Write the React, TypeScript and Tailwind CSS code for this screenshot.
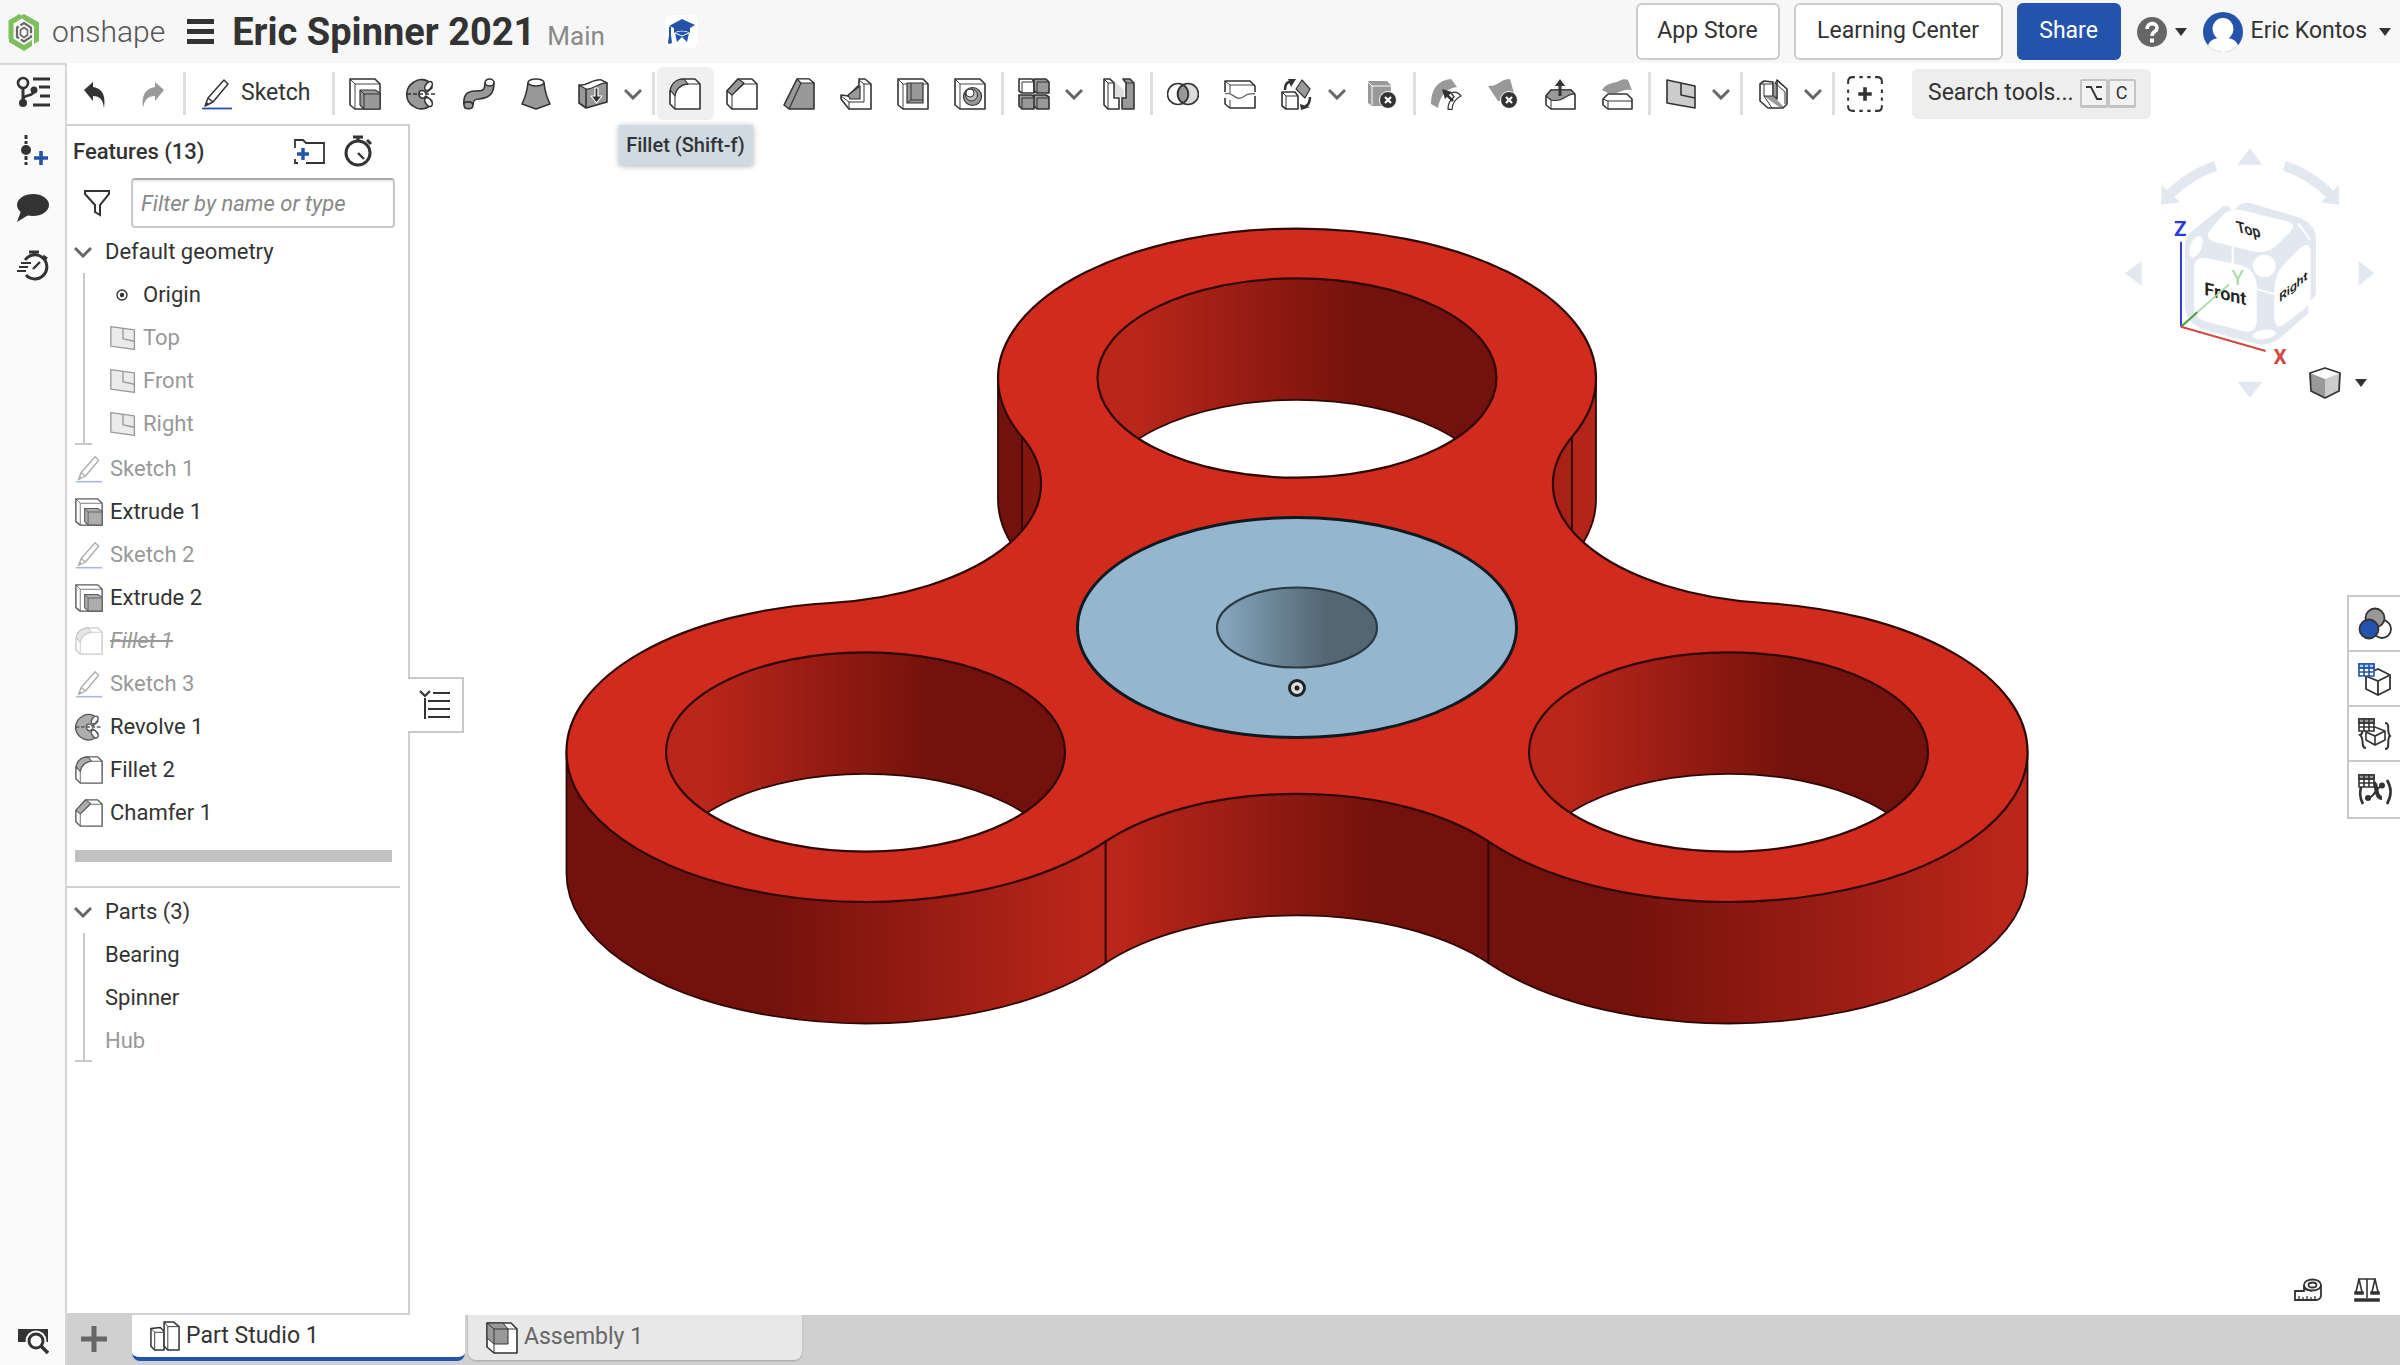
import type { ReactNode } from 'react'

const INK = '#333333'
const MID = '#999999'

interface IconProps {
  size?: number
  children: ReactNode
}

// All tool icons share a 30 unit grid with one unit of bleed for the strokes
function Icon({ size = 32, children }: IconProps) {
  return (
    <svg
      width={size}
      height={size}
      viewBox="-1 -1 32 32"
      fill="none"
      stroke={INK}
      strokeWidth="1.6"
      strokeLinejoin="round"
      aria-hidden="true"
      className="shrink-0"
    >
      {children}
    </svg>
  )
}

const icons: Record<string, ReactNode> = {
  undo: (
    <path d="M4 11 13 3v5c9 1 13 8 11 21-1-8-4-12-11-12v5z" fill={INK} stroke="none" />
  ),
  redo: (
    <path d="M27 11 18 3v5C9 9 4 16 6 29c1-8 5-12 12-12v5z" fill={MID} stroke="none" />
  ),
  sketch: (
    <>
      <path d="M3 27 6 19 22 1l4 4-15 18zM6 19l5 4M3 27l3-3" fill="#fff" strokeWidth="1.5" />
      <path d="M0 29.500H30" stroke="#2453ac" strokeWidth="1.800" />
    </>
  ),
  extrude: (
    <>
      <path d="M0 0H25L30 5V30H5L0 26z" fill="#fff" />
      <path d="M0 0 5 5H30M5 5V30" strokeWidth="0.900" />
      <path d="M10 11H25L30 14V30H14L10 26z" fill={MID} strokeWidth="1.200" />
      <path d="M10 11 14 15H30M14 15V30" strokeWidth="1" />
    </>
  ),
  revolve: (
    <>
      <path
        d="M24 5C20 0 12-1 7 3-3 9-2 22 6 27c6 5 15 3 18-2l1-3-6-5c-3 4-7 2-7-2s4-5 7-1l6-5z"
        fill={MID}
      />
      <ellipse cx="21.500" cy="7" rx="3" ry="5" transform="rotate(35 21.500 7)" fill="#fff" />
      <ellipse cx="21.500" cy="23" rx="3" ry="5" transform="rotate(-35 21.500 23)" fill="#fff" />
      <path d="M0 15H30" strokeDasharray="4 2" />
    </>
  ),
  sweep: (
    <>
      <path
        d="M21 4c0 8-3 8-10 8-8 0-12 4-11 14 0 5 9 5 9 0 0-5 2-6 6-6 11-1 15-6 15-16"
        fill={MID}
      />
      <ellipse cx="25.500" cy="3.500" rx="4.500" ry="3.500" fill="#fff" />
      <path d="M0 25c0-3 9-3 9 1" />
    </>
  ),
  loft: (
    <>
      <path d="M7 4C6 13 4 19 1 25l14 5 14-5C26 19 24 13 23 4z" fill={MID} />
      <ellipse cx="15" cy="3.500" rx="8" ry="3.500" fill="#fff" />
    </>
  ),
  thicken: (
    <>
      <path d="M1 6C8 8 14 0 23 1l6 3v19L8 29l-7-5z" fill={MID} />
      <path d="M1 6C8 8 14 0 23 1l6 3C22 3 15 11 8 10z" fill="#fff" strokeWidth="1.200" />
      <path d="M8 10v19" />
      <path d="M17 9h3v8h4l-5.500 7L13 17h4z" fill={INK} stroke="#fff" strokeWidth="1.200" />
    </>
  ),
  fillet: (
    <>
      <path d="M0 25V15C0 6 6 0 14 0H25L30 5V30H5z" fill="#fff" />
      <path d="M0 13C1 5 6 0 14 0L18 5C11 6 6 10 5 17L1 12z" fill={MID} strokeWidth="1.200" />
      <path d="M5 30V17C6 9 11 5 18 5H30M30 5 26 1" strokeWidth="1" />
    </>
  ),
  chamfer: (
    <>
      <path d="M0 25V12L11 0H25L30 5V30H5z" fill="#fff" />
      <path d="M0 12 11 0 17 4 5 16z" fill={MID} strokeWidth="1.200" />
      <path d="M5 30V16L17 5H30" strokeWidth="1" />
    </>
  ),
  draft: (
    <>
      <path d="M0 26 13 0H25L30 4V30H5z" fill={MID} />
      <path d="M13 0 17 4H30L25 0z" fill="#fff" strokeWidth="1.200" />
      <path d="M17 4 5 30" strokeWidth="1.200" />
    </>
  ),
  rib: (
    <>
      <path d="M18 0h6l6 5V30H8L0 20v-4l7 1L18 6z" fill="#fff" />
      <path d="M7 16 19 7v13H9z" fill={MID} strokeWidth="1.200" />
      <path d="M18 1 23 5V23H8L0 17M23 5h7M8 23v7" strokeWidth="1" />
    </>
  ),
  shell: (
    <>
      <path d="M0 0H25L30 5V30H5L0 26z" fill="#fff" />
      <path d="M0 0 5 5H30M5 5V30" strokeWidth="0.900" />
      <path d="M9 4H25V24H9z" fill={MID} strokeWidth="1.200" />
      <path d="M9 24l4-3V4M13 21H25" strokeWidth="1" />
    </>
  ),
  hole: (
    <>
      <path d="M0 0H25L30 5V30H5L0 26z" fill="#fff" />
      <path d="M0 0 5 5H30M5 5V30" strokeWidth="0.900" />
      <circle cx="17.500" cy="17.500" r="9" fill={MID} strokeWidth="1.200" />
      <circle cx="16.500" cy="16" r="6" fill="#bbb" strokeWidth="1" />
      <circle cx="15" cy="14" r="4" fill="#fff" strokeWidth="1" />
    </>
  ),
  pattern: (
    <>
      <path d="M0 0H13L15 3V14H3L0 12z" fill="#fff" />
      <path d="M15 0H27L30 3V14H18L15 12zM0 16H13L15 18V30H3L0 27zM15 16H27L30 18V30H18L15 27z" fill={MID} />
      <path d="M3 3h12M3 3v11M18 3h12M18 3v11M3 19h12M3 19v11M18 19h12M18 19v11" strokeWidth="1" />
    </>
  ),
  mirror: (
    <>
      <path d="M8 0 20 11v9l-9-3z" fill="#ddd" stroke="none" />
      <path d="M0 0h6l4 4v15h5v11H4L0 26z" fill="#fff" />
      <path d="M4 4h6M4 4v26M0 0l4 4" strokeWidth="1" />
      <path d="M19 0h7l4 4v26H18V19h4V4z" fill={MID} />
      <path d="M22 4h8" strokeWidth="1" />
    </>
  ),
  boolean: (
    <>
      <circle cx="10" cy="15" r="10.500" />
      <circle cx="20" cy="15" r="10.500" fill={MID} fillOpacity="0.350" />
      <path d="M15 6a10.500 10.500 0 0 1 0 18 10.500 10.500 0 0 1 0-18z" fill={MID} />
    </>
  ),
  split: (
    <>
      <path d="M0 13V2h25l5 5v6M0 19v6l5 4h25V17" fill="#fff" />
      <path d="M0 2l5 4h25M5 6v8M5 21v8" strokeWidth="0.900" />
      <path d="M0 15c7-4 10 8 18 3 4-3 7-4 12-3" strokeWidth="1.300" stroke="#666" />
    </>
  ),
  transform: (
    <>
      <path d="M0 13h13l3 4v13H4l-4-3z" fill="#fff" />
      <path d="M4 17h12M4 17v13M0 13l4 4" strokeWidth="1" />
      <path d="M20 1l8 9-5 9-9-9z" fill={MID} strokeWidth="1.200" />
      <path d="M3 11c0-5 2-8 5-8" strokeWidth="2.500" />
      <path d="M6 0h8l-5 8zM18 25l1 6 9-3z" fill={INK} stroke="none" />
      <path d="M28 18c0 5-2 9-5 9" strokeWidth="2.500" />
    </>
  ),
  deletePart: (
    <>
      <path d="M1 2h19l4 4v21H5l-4-3z" fill={MID} stroke="none" />
      <path d="M1 3l4 4h19M5 7v19" stroke="#fff" strokeWidth="1" />
      <circle cx="21" cy="21" r="8.500" fill={INK} stroke="#fff" strokeWidth="1" />
      <path d="M18 18l6 6m0-6-6 6" stroke="#fff" strokeWidth="2.200" />
    </>
  ),
  fillSurface: (
    <>
      <path d="M0 25C0 10 7 1 20 0l6 8C16 9 9 16 7 29z" fill={MID} stroke="none" />
      <path d="M17 30c0-6 2-9 6-12l-3-4c4-2 7-1 10 3-6 3-9 7-9 14z" fill="#fff" strokeWidth="1.300" />
      <path d="M22 22 13 13" strokeWidth="2.500" />
      <path d="M11 10l10 3-7 7z" fill={INK} stroke="none" />
    </>
  ),
  deleteSurface: (
    <>
      <path d="M0 7c10 1 12-7 22-7l6 21-18 1z" fill={MID} stroke="none" />
      <circle cx="21" cy="21" r="8.500" fill={INK} stroke="#fff" strokeWidth="1" />
      <path d="M18 18l6 6m0-6-6 6" stroke="#fff" strokeWidth="2.200" />
    </>
  ),
  moveFace: (
    <>
      <path d="M1 17 6 11h20l4 5v14H6l-5-4z" fill="#fff" />
      <path d="M1 17l5-6h20l4 4c-8-2-10 9-24 6z" fill={MID} strokeWidth="1.200" />
      <path d="M6 21v9" strokeWidth="1" />
      <path d="M15 17V4" strokeWidth="3" />
      <path d="M10 7l5-7 5 7z" fill={INK} stroke="none" />
    </>
  ),
  replaceFace: (
    <>
      <path d="M0 11C5 3 11 5 17 2c4-2 6-2 9-1l4 10c-10-2-13 5-24 3z" fill={MID} stroke="none" />
      <path d="M1 20l5-5h19l5 5v10H6l-5-4z" fill="#fff" />
      <path d="M1 20l5 2h24M6 22v8" strokeWidth="1" />
    </>
  ),
  plane: (
    <>
      <path d="M1 1 29 7V29L1 24z" fill="#ccc" />
      <path d="M15 4v12l14 3" />
    </>
  ),
  sheet: (
    <>
      <path d="M2 5 6 2l9 1v14l4 3V1l10 9v15l-4 4H10L2 22z" fill="#fff" />
      <path d="M6 17h9l11 11h-5z" fill={MID} stroke="none" />
      <path d="M6 5h9M6 5v12l8 12M19 1 17 4v14M17 4l10 9v12M2 5h4M6 17h9" strokeWidth="1" />
    </>
  ),
  custom: (
    <>
      <path
        d="M0 6V4q0-4 4-4h2M10 0h3M17 0h3M24 0h2q4 0 4 4v2M30 11v3M30 18v3M30 25v1q0 4-4 4h-2M20 30h-3M13 30h-3M6 30H4q-4 0-4-4v-1M0 21v-3M0 14v-3"
        strokeWidth="1.800"
      />
      <path d="M15 9v12M9 15h12" strokeWidth="3.200" />
    </>
  ),
  part: (
    <>
      <path d="M0 7 10 6l4 4V30H4L0 26z" fill="#fff" />
      <path d="M14 0H24l6 5V30H18l-4-4z" fill="#fff" />
      <path d="M4 11h10M4 11v19M0 7l4 4M18 5h12M18 5v25M14 0l4 5" strokeWidth="1" />
    </>
  ),
  assembly: (
    <>
      <path d="M0 0H24L30 6V30H7L0 24z" fill="#fff" />
      <path d="M0 0H16L21 6V21H7L0 15z" fill={MID} strokeWidth="1" />
      <path d="M0 0 7 6H30M7 6V30" strokeWidth="1" />
    </>
  ),
}

function Chevron() {
  return (
    <svg width="18" height="12" viewBox="0 0 18 12" fill="none" stroke="#666" strokeWidth="3" aria-hidden="true">
      <path d="M1 2 9 10 17 2" />
    </svg>
  )
}

function Caret() {
  return (
    <svg width="12" height="8" viewBox="0 0 12 8" fill={INK} aria-hidden="true">
      <path d="M0 0H12L6 8z" />
    </svg>
  )
}

const toolGroups: { name: string; label: string }[][] = [
  [
    { name: 'extrude', label: 'Extrude' },
    { name: 'revolve', label: 'Revolve' },
    { name: 'sweep', label: 'Sweep' },
    { name: 'loft', label: 'Loft' },
    { name: 'thicken', label: 'Thicken' },
    { name: 'more', label: 'More solids' },
  ],
  [
    { name: 'fillet', label: 'Fillet' },
    { name: 'chamfer', label: 'Chamfer' },
    { name: 'draft', label: 'Draft' },
    { name: 'rib', label: 'Rib' },
    { name: 'shell', label: 'Shell' },
    { name: 'hole', label: 'Hole' },
  ],
  [
    { name: 'pattern', label: 'Linear pattern' },
    { name: 'more', label: 'More patterns' },
    { name: 'mirror', label: 'Mirror' },
  ],
  [
    { name: 'boolean', label: 'Boolean' },
    { name: 'split', label: 'Split' },
    { name: 'transform', label: 'Transform' },
    { name: 'more', label: 'More transforms' },
    { name: 'deletePart', label: 'Delete part' },
  ],
  [
    { name: 'fillSurface', label: 'Modify fillet' },
    { name: 'deleteSurface', label: 'Delete face' },
    { name: 'moveFace', label: 'Move face' },
    { name: 'replaceFace', label: 'Replace face' },
  ],
  [
    { name: 'plane', label: 'Plane' },
    { name: 'more', label: 'More planes' },
  ],
  [
    { name: 'sheet', label: 'Sheet metal' },
    { name: 'more', label: 'More sheet metal' },
  ],
  [{ name: 'custom', label: 'Add custom features' }],
]

function Separator() {
  return <div className="mx-[2px] h-[43px] w-[3px] shrink-0 bg-[#dedede]" />
}

function ToolButton({ name, label }: { name: string; label: string }) {
  if (name === 'more') {
    return (
      <button aria-label={label} className="flex h-[53px] w-7 items-center pl-[2px]">
        <Chevron />
      </button>
    )
  }
  const active = name === 'fillet'
  return (
    <div className="relative">
      <button
        aria-label={label}
        className={
          active
            ? 'flex h-[53px] w-[57px] items-center justify-center rounded-md bg-[#f0f0f0] pr-[2px]'
            : 'flex h-[53px] w-[57px] items-center justify-center rounded-md pr-[2px]'
        }
      >
        <Icon size={name === 'custom' ? 36 : 32}>{icons[name]}</Icon>
      </button>
      {active && (
        <div
          role="tooltip"
          className="absolute top-[58px] left-1/2 z-20 flex h-10 w-[134px] -translate-x-1/2 items-center justify-center bg-[#d0dae3] text-[20px] font-medium whitespace-nowrap shadow-[0_1px_6px_rgba(0,0,0,0.3)]"
        >
          Fillet (Shift-f)
        </div>
      )}
    </div>
  )
}

function Toolbar() {
  return (
    <div role="toolbar" aria-label="Part tools" className="flex items-center py-1">
      <ToolButton name="undo" label="Undo" />
      <ToolButton name="redo" label="Redo" />
      <Separator />
      <button className="flex h-[53px] w-[142px] items-center gap-2 pl-[13px] text-[23px]">
        <Icon>{icons.sketch}</Icon>
        Sketch
      </button>
      {toolGroups.map((group, i) => (
        <div key={i} className="flex items-center">
          <Separator />
          {group.map(tool => (
            <ToolButton key={tool.label} {...tool} />
          ))}
        </div>
      ))}
      <button className="ml-[18px] flex h-[50px] w-[239px] items-center rounded-md bg-[#eeeeee] pl-4 text-[23px]">
        Search tools...
        <kbd className="ml-[6px] flex h-[29px] w-7 items-center justify-center rounded-xs border-2 border-b-3 border-[#c4c4c4] bg-[#f2f2f2] font-[inherit]">
          <svg width="16" height="14" viewBox="0 0 16 14" fill="none" stroke={INK} strokeWidth="1.8" aria-label="Option">
            <path d="M0 1h5l6 12h5M10 1h6" />
          </svg>
        </kbd>
        <kbd className="flex h-[29px] w-7 items-center justify-center rounded-xs border-2 border-b-3 border-[#c4c4c4] bg-[#f2f2f2] font-[inherit] text-lg">
          C
        </kbd>
      </button>
    </div>
  )
}

function Header() {
  return (
    <header className="flex h-[63px] shrink-0 items-center bg-[#f7f7f7] pl-2">
      <svg width="32" height="38" viewBox="0 0 32 38" fill="none" aria-hidden="true">
        <path d="M13 3 3 9v17" stroke="#7cbf5b" strokeWidth="5" />
        <path d="M12 3 16 1 31 9.500V28l-5 3V13L16 7z" fill="#7cbf5b" />
        <path d="M1 23 6 26 16 32 24 27v6l-8 5L1 29z" fill="#7cbf5b" />
        <path d="M16 10 23 14.500V24L16 28.500 9 24V14.500z" stroke="#666" strokeWidth="2.200" strokeDasharray="14 2" />
        <path d="M16 14.500 19.500 17v5L16 24.500 12.500 22v-5z" stroke="#666" strokeWidth="1.600" />
      </svg>
      <span className="ml-3 text-[30px] leading-[38px] font-light text-[#555]">onshape</span>
      <button aria-label="Menu" className="ml-[22px] flex w-[27px] flex-col gap-[5px]">
        <span className="h-[5px] bg-[#333]" />
        <span className="h-[5px] bg-[#333]" />
        <span className="h-[5px] bg-[#333]" />
      </button>
      <div className="ml-[18px] flex items-baseline gap-3">
        <h1 className="text-[38px] leading-[48px] font-bold">Eric Spinner 2021</h1>
        <span className="text-[26px] text-[#888]">Main</span>
      </div>
      <button aria-label="Education" className="ml-[60px] flex size-[33px] items-center justify-center rounded-md bg-white">
        <svg width="27" height="26" viewBox="0 0 27 26" fill="#2453ac" aria-hidden="true">
          <path d="M14 0 27 6 22 9v5c-4-3-12-3-16 0V9L1 7z" />
          <path d="M1 8h2v8l1 8-3 1-1-1 1-8z" />
          <path d="M7 14c4-2 10-2 14 0l-2 9-5-5-5 5z" />
          <path d="M7 14l7 3 7-3" stroke="#fff" strokeWidth="1" fill="none" />
        </svg>
      </button>
      <div className="ml-auto flex h-[60px] items-center pr-[9px] text-[23px]">
        <button className="h-[57px] w-36 rounded-md border-2 border-[#ccc] bg-white">App Store</button>
        <button className="ml-[14px] h-[57px] w-[209px] rounded-md border-2 border-[#ccc] bg-white">Learning Center</button>
        <button className="ml-[14px] h-[57px] w-26 rounded-md bg-[#2453ac] text-white">Share</button>
        <button aria-label="Help" className="ml-4 flex items-center gap-2">
          <svg width="30" height="30" viewBox="0 0 30 30" aria-hidden="true">
            <circle cx="15" cy="15" r="15" fill="#666" />
            <path d="M10 12c0-7 10-7 10-1 0 4-5 3-5 8" fill="none" stroke="#fff" strokeWidth="3.600" />
            <path d="M13 21.500h4v4h-4z" fill="#fff" />
          </svg>
          <Caret />
        </button>
        <button className="ml-4 flex items-center">
          <svg width="40" height="40" viewBox="0 0 40 40" aria-hidden="true">
            <clipPath id="avatar">
              <circle cx="20" cy="20" r="20" />
            </clipPath>
            <g clipPath="url(#avatar)">
              <path d="M0 0H40V40H0z" fill="#2453ac" />
              <ellipse cx="20" cy="17" rx="10.500" ry="11" fill="#fff" />
              <path d="M4 40c0-11 6-13 11-14h10c5 1 11 3 11 14z" fill="#fff" />
            </g>
          </svg>
          <span className="mr-3 ml-2">Eric Kontos</span>
          <Caret />
        </button>
      </div>
    </header>
  )
}

function Rail() {
  return (
    <nav aria-label="Document" className="flex w-[67px] shrink-0 flex-col items-center border-t-2 border-r-2 border-[#d6d6d6] bg-[#fafafa] pt-[11px] pb-[9px]">
      <div className="flex flex-col gap-[26px]">
        <button aria-label="Versions and history">
          <svg width="34" height="32" viewBox="0 0 34 32" fill="none" stroke={INK} strokeWidth="3" aria-hidden="true">
            <circle cx="7" cy="7" r="5" strokeWidth="2.600" />
            <path d="M7 12v14" />
            <path d="M7 24c0-7 10-2 11-9" strokeWidth="2.600" />
            <circle cx="7" cy="27" r="4" fill={INK} stroke="none" />
            <circle cx="18" cy="14" r="3.500" fill={INK} stroke="none" />
            <path d="M17 3h17M23 11h11M24 20h10M17 29h17" />
          </svg>
        </button>
        <button aria-label="Insert version">
          <svg width="34" height="32" viewBox="0 0 34 32" fill="none" aria-hidden="true">
            <circle cx="10" cy="16" r="5" fill={INK} />
            <path d="M10 1v9M10 22v9" stroke={INK} strokeWidth="3" strokeDasharray="4 2" />
            <path d="M25 17v14M18 24h14" stroke="#2453ac" strokeWidth="3.600" />
          </svg>
        </button>
        <button aria-label="Comments">
          <svg width="34" height="32" viewBox="0 0 34 32" fill={INK} aria-hidden="true">
            <ellipse cx="17" cy="13" rx="16" ry="11" />
            <path d="M5 19 1 30l13-8z" />
          </svg>
        </button>
        <button aria-label="Performance">
          <svg width="34" height="32" viewBox="0 0 34 32" fill="none" stroke={INK} aria-hidden="true">
            <path d="M9 10a12 12 0 1 1 1 15" strokeWidth="3" />
            <path d="M13 2h10M18 2v4M27 6l4 3" strokeWidth="3" />
            <path d="M5 13h10M3 17h9M1 21h9" strokeWidth="2" />
            <path d="M17 19 24 12" strokeWidth="2.400" />
          </svg>
        </button>
      </div>
      <button aria-label="Tab manager" className="mt-auto">
        <svg width="32" height="32" viewBox="0 0 32 32" fill="none" aria-hidden="true">
          <path d="M1 5H31V18H1z" fill={INK} />
          <circle cx="19" cy="17" r="10.500" fill="#fafafa" />
          <circle cx="19" cy="17" r="7" stroke={INK} strokeWidth="3" />
          <path d="M24 22l7 7" stroke={INK} strokeWidth="3.600" />
        </svg>
      </button>
    </nav>
  )
}

const planes = ['Top', 'Front', 'Right']

const features = [
  { icon: 'sketch', name: 'Sketch 1', style: 'muted' },
  { icon: 'extrude', name: 'Extrude 1', style: '' },
  { icon: 'sketch', name: 'Sketch 2', style: 'muted' },
  { icon: 'extrude', name: 'Extrude 2', style: '' },
  { icon: 'fillet', name: 'Fillet 1', style: 'suppressed' },
  { icon: 'sketch', name: 'Sketch 3', style: 'muted' },
  { icon: 'revolve', name: 'Revolve 1', style: '' },
  { icon: 'fillet', name: 'Fillet 2', style: '' },
  { icon: 'chamfer', name: 'Chamfer 1', style: '' },
]

const iconTone: Record<string, string> = {
  '': 'opacity-80',
  muted: 'opacity-40',
  suppressed: 'opacity-25',
}

const textTone: Record<string, string> = {
  '': '',
  muted: 'text-[#999]',
  suppressed: 'text-[#999] italic line-through',
}

function TreeLine() {
  return (
    <div className="ml-2 flex w-[17px] flex-col items-center">
      <div className="w-[2px] flex-1 bg-[#c8c8c8]" />
      <div className="h-[2px] w-full bg-[#c8c8c8]" />
    </div>
  )
}

function FeaturePanel() {
  return (
    <aside className="flex w-[343px] shrink-0 flex-col border-t-2 border-r-2 border-b-2 border-[#cfcfcf] bg-white text-[22px]">
      <div className="flex h-[50px] items-center pr-[35px] pl-[6px]">
        <h2 className="text-[22px] font-medium">Features (13)</h2>
        <button aria-label="Add folder" className="ml-auto">
          <svg width="32" height="28" viewBox="0 0 32 28" fill="none" aria-hidden="true">
            <path d="M2 11V3h8l3 3h18v20H13M2 22v4h3" stroke={INK} strokeWidth="1.800" />
            <path d="M10 11v12M4 17h12" stroke="#2453ac" strokeWidth="3.400" />
          </svg>
        </button>
        <button aria-label="Regeneration times" className="ml-[18px]">
          <svg width="30" height="32" viewBox="0 0 30 32" fill="none" stroke={INK} aria-hidden="true">
            <circle cx="15" cy="18" r="12" strokeWidth="3" />
            <path d="M10 2h10M15 2v4M24 5l4 4" strokeWidth="3" />
            <path d="M15 18l6 6" strokeWidth="2.400" />
          </svg>
        </button>
      </div>
      <div className="flex h-[54px] items-center pl-[15px]">
        <svg width="30" height="30" viewBox="0 0 30 30" fill="none" stroke={INK} strokeWidth="2" aria-hidden="true">
          <path d="M3 3H27V6L18 17V27L13 24V17L3 6z" />
        </svg>
        <input
          type="text"
          aria-label="Filter by name or type"
          placeholder="Filter by name or type"
          className="ml-[19px] h-[50px] w-[264px] rounded-sm border-2 border-[#c8c8c8] border-t-[#aaa] pl-2 italic shadow-[inset_0_2px_2px_rgba(0,0,0,0.08)] placeholder:text-[#888]"
        />
      </div>

      <button className="flex h-[43px] items-center gap-[13px] pl-[7px]">
        <Chevron />
        Default geometry
      </button>
      <div className="flex">
        <TreeLine />
        <ul className="ml-[18px]">
          <li className="flex h-[43px] items-center">
            <svg width="26" height="14" viewBox="0 0 26 14" fill="none" stroke={INK} aria-hidden="true">
              <circle cx="12" cy="7" r="5" strokeWidth="1.400" />
              <circle cx="12" cy="7" r="2.200" fill={INK} stroke="none" />
            </svg>
            <span className="ml-[7px]">Origin</span>
          </li>
          {planes.map(name => (
            <li key={name} className="flex h-[43px] items-center text-[#999]">
              <span className="opacity-50">
                <Icon size={26}>
                  <path d="M0 1 29 5V29L0 25z" fill="#d8d8d8" />
                  <path d="M15 3v13l14 3" />
                </Icon>
              </span>
              <span className="ml-[7px]">{name}</span>
            </li>
          ))}
        </ul>
      </div>
      <ul className="mt-[2px] pl-2">
        {features.map(f => (
          <li key={f.name} className="flex h-[43px] items-center gap-[7px]">
            <span className={iconTone[f.style]}>
              <Icon size={28}>{icons[f.icon]}</Icon>
            </span>
            <span className={textTone[f.style]}>{f.name}</span>
          </li>
        ))}
      </ul>
      <div className="mt-4 mr-4 ml-2 h-3 bg-[#c1c1c1]" />
      <div className="mt-6 mr-2 h-[2px] bg-[#cfcfcf]" />

      <button className="mt-[2px] flex h-[43px] items-center gap-[13px] pl-[7px]">
        <Chevron />
        Parts (3)
      </button>
      <div className="flex">
        <TreeLine />
        <ul className="ml-[13px]">
          <li className="flex h-[43px] items-center">Bearing</li>
          <li className="flex h-[43px] items-center">Spinner</li>
          <li className="flex h-[43px] items-center text-[#999]">Hub</li>
        </ul>
      </div>
    </aside>
  )
}

const BODY =
  'M1022 437A299 149.500 0 0 1 998 378A299 149.500 0 0 1 1596 378A299 149.500 0 0 1 1572 437' +
  'A240 120 0 0 0 1764 603A299 149.500 0 0 1 2027.500 752A299 149.500 0 0 1 1488.500 841.500' +
  'A240 120 0 0 0 1105.500 841.500A299 149.500 0 0 1 566.500 752A299 149.500 0 0 1 830 603' +
  'A240 120 0 0 0 1022 437Z'

const holes = [
  { id: 'hole-top', cx: 1297, cy: 378 },
  { id: 'hole-left', cx: 865.5, cy: 752 },
  { id: 'hole-right', cx: 1728.5, cy: 752 },
]

function Shade({ id, x1, x2, from, to }: { id: string; x1: number; x2: number; from: string; to: string }) {
  return (
    <linearGradient id={id} gradientUnits="userSpaceOnUse" x1={x1} x2={x2} y1="0" y2="0">
      <stop offset="0" stopColor={from} />
      <stop offset="1" stopColor={to} />
    </linearGradient>
  )
}

function Spinner() {
  const dark = '#73120c'
  const light = '#bb261a'
  const edge = '#2e0805'
  return (
    <svg viewBox="410 124 1990 1191" className="block h-full w-full" role="img" aria-label="Spinner model">
      <defs>
        <Shade id="wall-left" x1={770} x2={1090} from={dark} to={light} />
        <Shade id="wall-mid" x1={1115} x2={1375} from={light} to={dark} />
        <Shade id="wall-right" x1={1620} x2={2010} from={dark} to={light} />
        <Shade id="hub" x1={1225} x2={1325} from="#83a4bb" to="#536672" />
        {holes.map(h => (
          <Shade key={h.id} id={`${h.id}-wall`} x1={h.cx - 165} x2={h.cx + 65} from={light} to={dark} />
        ))}
        {holes.map(h => (
          <clipPath key={h.id} id={h.id}>
            <ellipse cx={h.cx} cy={h.cy} rx="199.500" ry="99.700" />
          </clipPath>
        ))}
      </defs>

      {/* Side walls, their upper edges run under the top face */}
      <g stroke={edge} strokeWidth="1.800">
        <path d="M1022 437V600H1060V437z" fill="#85160e" />
        <path d="M1572 437V600H1534V437z" fill="#a82117" />
        <path d="M998 378V499.500A299 149.500 0 0 0 1022 558V378z" fill={dark} />
        <path d="M1596 378V499.500A299 149.500 0 0 1 1572 558V378z" fill="#b3241a" />
        <path d="M1105.500 780V963A240 120 0 0 1 1488.500 963V780z" fill="url(#wall-mid)" />
        <path d="M566.500 752V873.500A299 149.500 0 0 0 1105.500 963V752z" fill="url(#wall-left)" />
        <path d="M2027.500 752V873.500A299 149.500 0 0 1 1488.500 963V752z" fill="url(#wall-right)" />
      </g>

      <path d={BODY} fill="#d12b1e" stroke={edge} strokeWidth="2.200" />

      {holes.map(h => (
        <g key={h.id}>
          <g clipPath={`url(#${h.id})`}>
            <rect x={h.cx - 200} y={h.cy - 100} width="400" height="200" fill={`url(#${h.id}-wall)`} />
            <ellipse cx={h.cx} cy={h.cy + 121.5} rx="199.500" ry="99.700" fill="#fff" stroke={edge} strokeWidth="1.800" />
          </g>
          <ellipse cx={h.cx} cy={h.cy} rx="199.500" ry="99.700" fill="none" stroke={edge} strokeWidth="2.200" />
        </g>
      ))}

      {/* Bearing, bore and origin marker */}
      <ellipse cx="1297" cy="627.500" rx="219.500" ry="110" fill="#94b6cf" stroke="#0e1a22" strokeWidth="3" />
      <ellipse cx="1297" cy="627.500" rx="80" ry="40" fill="url(#hub)" stroke="#2b3840" strokeWidth="2.200" />
      <circle cx="1297" cy="688" r="7.500" fill="#ddd" stroke="#222" strokeWidth="3" />
      <circle cx="1297" cy="688" r="2.500" fill="#222" />
    </svg>
  )
}

function ViewCube() {
  return (
    <div className="absolute top-[6px] right-0 h-[290px] w-[320px]">
      <svg width="320" height="290" viewBox="0 0 960 870" fill="#e2e8ef" className="font-[Roboto,sans-serif]" aria-label="View cube">
        <path d="M510 55 547 104H472zM473 755H547L510 804zM135 430 185 393V467zM883 430 836 393V467z" />
        <path d="M407 108Q330 132 268 195M613 108Q690 132 752 195" fill="none" stroke="#e2e8ef" strokeWidth="30" />
        <path d="M245 165 243 224 300 217zM777 165V224L722 217z" />
        <path d="M430 228Q450 225 453 240H465Q480 215 510 219L660 263Q706 285 708 325V490Q706 505 685 515V550L600 625Q570 648 530 642L375 600Q318 580 315 530V350Q312 325 330 308z" />
        <g fill="#fff">
          <path d="M435 248Q455 236 485 240L625 275Q650 285 632 304L585 350Q560 370 525 365L400 335Q372 324 392 298z" />
          <path d="M375 383 480 405Q530 420 530 470V575Q528 610 490 604L375 574Q342 562 342 530V410Q345 383 375 383z" />
          <path d="M680 345Q692 345 692 365V500Q690 520 675 535L610 585Q585 600 583 560V480Q585 430 610 405L660 355Q672 345 680 345z" />
          <circle cx="553" cy="408" r="34" />
          <ellipse cx="348" cy="350" rx="17" ry="34" transform="rotate(22 348 350)" />
          <ellipse cx="553" cy="613" rx="35" ry="14" transform="rotate(-8 553 613)" />
        </g>
        <path d="M458 350V405M530 478 583 492M655 280 690 330M682 522 700 508" stroke="#fff" strokeWidth="6" />
        <g fontWeight="600" fill="#222" textAnchor="middle">
          <text transform="translate(508 315) rotate(14) skewX(25)" fontSize="44">Top</text>
          <text transform="translate(436 510) skewY(14)" fontSize="54">Front</text>
          <text transform="translate(640 482) skewY(-40)" fontSize="36">Right</text>
        </g>
        <path d="M303 590V335" stroke="#3340dd" strokeWidth="6" />
        <path d="M303 590 447 463" stroke="#a9d9a3" strokeWidth="5" />
        <path d="M303 590 352 547" stroke="#4f9f45" strokeWidth="6" />
        <path d="M303 590 557 663" stroke="#d14a42" strokeWidth="6" />
        <g fontSize="62" fontWeight="700" textAnchor="middle">
          <text x="301" y="317" fill="#2a39e0">Z</text>
          <text x="473" y="464" fill="#a9d9a3" fontWeight="400">Y</text>
          <text x="600" y="701" fill="#d14a42">X</text>
        </g>
      </svg>
      <button aria-label="View options" className="absolute right-[33px] bottom-[21px] flex items-center gap-[14px]">
        <svg width="32" height="32" viewBox="0 0 32 32" strokeLinejoin="round" aria-hidden="true">
          <path d="M1 6 16 12V31L3 24z" fill="#999" />
          <path d="M16 12 31 6 30 24 16 31z" fill="#ccc" />
          <path d="M16 1 31 6 30 24 16 31 2 24 1 6z" fill="none" stroke={INK} strokeWidth="1.800" />
        </svg>
        <Caret />
      </button>
    </div>
  )
}

function MiniTable({ color, head }: { color: string; head: string }) {
  return (
    <g stroke={color} strokeWidth="1.600">
      <path d="M1 2H16V14H1z" fill="#fff" />
      <path d="M1 2H16V6H1z" fill={head} />
      <path d="M1 6H16M1 10H16M6 2V14M11 2V14" fill="none" />
    </g>
  )
}

function SidePanelTabs() {
  return (
    <div className="absolute top-[471px] right-0 flex w-[53px] flex-col divide-y-2 divide-[#c8c8c8] border-2 border-r-0 border-[#c8c8c8] bg-white">
      <button aria-label="Appearances" className="flex h-[55px] items-center pl-[9px]">
        <svg width="34" height="34" viewBox="0 0 34 34" stroke={INK} strokeWidth="1.800" aria-hidden="true">
          <circle cx="24" cy="22" r="9" fill="#fff" />
          <circle cx="17" cy="11" r="9.500" fill={MID} />
          <circle cx="11" cy="22" r="9.500" fill="#2453ac" />
        </svg>
      </button>
      <button aria-label="Configurations" className="flex h-[55px] items-center pl-[9px]">
        <svg width="34" height="34" viewBox="0 0 34 34" fill="none" stroke={INK} strokeWidth="1.800" aria-hidden="true">
          <path d="M8 12 20 7 32 13V27L20 33 8 27zM8 14 20 19 32 13M20 19V33" />
          <MiniTable color="#2453ac" head="#a8d0f5" />
        </svg>
      </button>
      <button aria-label="Part properties" className="flex h-[55px] items-center pl-[9px]">
        <svg width="34" height="34" viewBox="0 0 34 34" fill="none" stroke={INK} strokeWidth="1.600" aria-hidden="true">
          <path d="M8 13 17 10 27 14V23L17 28 8 23zM8 15 17 19 27 14M17 19V28" />
          <path d="M8 31c-6 0-1-9-6-13 5-2 0-6 2-7M27 6c6 0 1 9 5 13-4 3 1 13-5 13" strokeWidth="2" />
          <MiniTable color={INK} head={MID} />
        </svg>
      </button>
      <button aria-label="Variables" className="flex h-[55px] items-center pl-[9px]">
        <svg width="34" height="34" viewBox="0 0 34 34" fill="none" stroke={INK} strokeWidth="2" aria-hidden="true">
          <path d="M4 12c-3 6-2 14 1 19M29 7c5 8 4 17 0 24" strokeWidth="2.600" />
          <path d="M15 10c5-1 1 15 9 15" strokeWidth="4" />
          <path d="M24 13c-5 0-8 12-14 12" strokeWidth="2" />
          <circle cx="24" cy="12.500" r="3" fill={INK} stroke="none" />
          <circle cx="10" cy="25" r="3" fill={INK} stroke="none" />
          <MiniTable color={INK} head={MID} />
        </svg>
      </button>
    </div>
  )
}

function Viewport() {
  return (
    <main className="relative min-w-0 flex-1">
      <Spinner />
      <button
        aria-label="Toggle feature list"
        className="absolute top-[553px] -left-[2px] flex h-14 w-[56px] items-center justify-center border-2 border-l-0 border-[#c8c8c8] bg-white"
      >
        <svg width="32" height="30" viewBox="0 0 32 30" fill="none" stroke={INK} strokeWidth="2" aria-hidden="true">
          <path d="M1 1 6 6 11 1" strokeWidth="2.200" />
          <path d="M6 8V29M14 3H31M9 11H31M9 19H31M9 27H31" />
        </svg>
      </button>
      <ViewCube />
      <SidePanelTabs />
      <div className="absolute right-[20px] bottom-[12px] flex gap-[32px]">
        <button aria-label="Measure">
          <svg width="28" height="26" viewBox="0 0 28 26" fill="none" stroke={INK} strokeWidth="1.800" aria-hidden="true">
            <path d="M10 8V14H1V23H23Q27 22 27 18V8" />
            <ellipse cx="18.500" cy="8" rx="8.500" ry="5.500" />
            <ellipse cx="18.500" cy="8" rx="4" ry="2.500" />
            <path d="M10 11Q12 14 18 14M5 22V19M9 22V20M13 22V19M17 22V20M21 22V19" strokeWidth="1.300" />
          </svg>
        </button>
        <button aria-label="Mass properties">
          <svg width="26" height="26" viewBox="0 0 26 26" fill="none" stroke={INK} strokeWidth="1.600" aria-hidden="true">
            <path d="M4 2H22M13 2V21M5 2 2 15M5 2 8 15M21 2 18 15M21 2 24 15" />
            <path d="M1 15H9V17H1zM17 15H25V17H17zM1 22H25V24H1z" fill={INK} />
          </svg>
        </button>
      </div>
    </main>
  )
}

function TabBar() {
  return (
    <footer className="flex h-[50px] shrink-0 items-start gap-[3px] bg-[#d0d0d0] text-[23px]">
      <button aria-label="Insert new tab" className="flex h-[48px] w-[62px] items-center justify-center pr-[8px]">
        <svg width="26" height="26" viewBox="0 0 26 26" stroke="#666" strokeWidth="5" aria-hidden="true">
          <path d="M13 0V26M0 13H26" />
        </svg>
      </button>
      <button className="flex h-[46px] w-[333px] items-center gap-[6px] rounded-b-lg border-b-4 border-[#2453ac] bg-white pl-[18px]">
        <Icon size={30}>{icons.part}</Icon>
        Part Studio 1
      </button>
      <button className="flex h-[45px] w-[334px] items-center gap-[6px] rounded-b-lg bg-[#e8e8e8] pl-[18px] text-[#666] shadow-[0_1px_2px_rgba(0,0,0,0.2)]">
        <Icon>{icons.assembly}</Icon>
        Assembly 1
      </button>
    </footer>
  )
}

export default function App() {
  return (
    <div className="flex h-screen flex-col overflow-hidden bg-white font-[Roboto,'Liberation_Sans',sans-serif] text-[#333]">
      <Header />
      <div className="flex min-h-0 flex-1">
        <Rail />
        <div className="flex min-w-0 flex-1 flex-col">
          <Toolbar />
          <div className="flex min-h-0 flex-1">
            <FeaturePanel />
            <Viewport />
          </div>
          <TabBar />
        </div>
      </div>
    </div>
  )
}
